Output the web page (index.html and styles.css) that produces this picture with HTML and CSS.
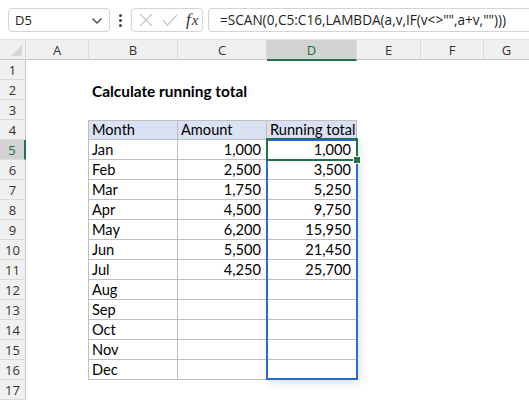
FILE: index.html
```html
<!DOCTYPE html>
<html>
<head>
<meta charset="utf-8">
<link rel="stylesheet" href="styles.css">
</head>
<body>
<div class="app">
  <div class="fbar">
    <div class="namebox"><span class="nb-text">D5</span>
      <svg class="chev" width="12" height="8" viewBox="0 0 12 8"><path d="M1.5 1.5 L6 6 L10.5 1.5" fill="none" stroke="#444" stroke-width="1.3"/></svg>
    </div>
    <div class="dots"><span></span><span></span><span></span></div>
    <div class="fxbox">
      <svg width="14" height="14" viewBox="0 0 14 14"><path d="M1 1 L13 13 M13 1 L1 13" stroke="#c8c8c8" stroke-width="1.3" fill="none"/></svg>
      <svg width="16" height="14" viewBox="0 0 16 14"><path d="M1 7.5 L5.5 12 L15 2" stroke="#c8c8c8" stroke-width="1.3" fill="none"/></svg>
      <span class="fx"><i>f</i><i class="x">x</i></span>
    </div>
    <div class="formula">=SCAN(0,C5:C16,LAMBDA(a,v,IF(v&lt;&gt;"",a+v,"")))</div>
  </div>
  <div class="sheet">
    <div class="colhdr">
      <div class="corner"><svg width="26" height="20" viewBox="0 0 26 20"><path d="M22 5 L22 16 L11 16 Z" fill="#d6d6d6"/></svg></div>
      <div class="ch a">A</div><div class="ch b">B</div><div class="ch c">C</div><div class="ch d sel">D</div><div class="ch e">E</div><div class="ch f">F</div><div class="ch g">G</div>
    </div>
    <div class="row"><div class="rh">1</div></div>
    <div class="row"><div class="rh">2</div><div class="cell a"></div><div class="cell title">Calculate running total</div></div>
    <div class="row"><div class="rh">3</div></div>
    <div class="row"><div class="rh">4</div><div class="cell a"></div><div class="cell b t th first">Month</div><div class="cell c t th">Amount</div><div class="cell d t th">Running total</div></div>
    <div class="row"><div class="rh sel">5</div><div class="cell a"></div><div class="cell b t first">Jan</div><div class="cell c t num">1,000</div><div class="cell d t num">1,000</div></div>
    <div class="row"><div class="rh">6</div><div class="cell a"></div><div class="cell b t first">Feb</div><div class="cell c t num">2,500</div><div class="cell d t num">3,500</div></div>
    <div class="row"><div class="rh">7</div><div class="cell a"></div><div class="cell b t first">Mar</div><div class="cell c t num">1,750</div><div class="cell d t num">5,250</div></div>
    <div class="row"><div class="rh">8</div><div class="cell a"></div><div class="cell b t first">Apr</div><div class="cell c t num">4,500</div><div class="cell d t num">9,750</div></div>
    <div class="row"><div class="rh">9</div><div class="cell a"></div><div class="cell b t first">May</div><div class="cell c t num">6,200</div><div class="cell d t num">15,950</div></div>
    <div class="row"><div class="rh">10</div><div class="cell a"></div><div class="cell b t first">Jun</div><div class="cell c t num">5,500</div><div class="cell d t num">21,450</div></div>
    <div class="row"><div class="rh">11</div><div class="cell a"></div><div class="cell b t first">Jul</div><div class="cell c t num">4,250</div><div class="cell d t num">25,700</div></div>
    <div class="row"><div class="rh">12</div><div class="cell a"></div><div class="cell b t first">Aug</div><div class="cell c t"></div><div class="cell d t"></div></div>
    <div class="row"><div class="rh">13</div><div class="cell a"></div><div class="cell b t first">Sep</div><div class="cell c t"></div><div class="cell d t"></div></div>
    <div class="row"><div class="rh">14</div><div class="cell a"></div><div class="cell b t first">Oct</div><div class="cell c t"></div><div class="cell d t"></div></div>
    <div class="row"><div class="rh">15</div><div class="cell a"></div><div class="cell b t first">Nov</div><div class="cell c t"></div><div class="cell d t"></div></div>
    <div class="row"><div class="rh">16</div><div class="cell a"></div><div class="cell b t first">Dec</div><div class="cell c t"></div><div class="cell d t"></div></div>
    <div class="row"><div class="rh">17</div></div>
    <div class="range"></div>
    <div class="active"><div class="handle"></div></div>
  </div>
</div>
</body>
</html>
```
FILE: styles.css
```css
* { box-sizing: border-box; }
html, body { margin: 0; padding: 0; background: #fff; }
body { width: 529px; height: 400px; overflow: hidden; font-family: "Open Sans", "Noto Sans", sans-serif; }
.app { width: 529px; height: 400px; overflow: hidden; }

.fbar { height: 39px; display: flex; align-items: flex-start; padding-top: 8px; padding-left: 8px; background: #fff; }
.namebox { width: 102px; height: 24px; border: 1px solid #d4d4d4; border-radius: 4px; display: flex; align-items: center; justify-content: space-between; padding: 0 6px 0 6px; }
.nb-text { font-family: "Open Sans", sans-serif; font-size: 13px; color: #222; }
.chev { margin-top: 1px; }
.dots { width: 21px; height: 24px; display: flex; flex-direction: column; align-items: center; justify-content: center; gap: 2px; }
.dots span { width: 3px; height: 3px; background: #444; border-radius: 50%; }
.fxbox { width: 72px; height: 24px; border: 1px solid #d4d4d4; border-radius: 4px; display: flex; align-items: center; padding-left: 7px; gap: 9px; }
.fx { font-family: "Liberation Serif", serif; font-size: 17px; color: #333; display: flex; align-items: baseline; margin-left: -1px; }
.fx i { font-style: italic; }
.fx .x { font-size: 15px; margin-left: 1px; }
.formula { flex: 1; height: 24px; margin-left: 5px; border: 1px solid #d4d4d4; border-right: none; border-radius: 4px 0 0 4px; font-family: "Open Sans", sans-serif; font-size: 13.6px; color: #222; padding-left: 11px; line-height: 22px; white-space: nowrap; }

.sheet { position: relative; }
.colhdr { display: flex; height: 21px; background: #f0f0f0; border-top: 1px solid #e4e4e4; border-bottom: 1px solid #c6c6c6; }
.corner { width: 26px; height: 20px; border-right: 1px solid #d8d8d8; }
.corner svg { display: block; }
.ch { height: 20px; display: flex; align-items: center; justify-content: center; font-family: "Open Sans", sans-serif; font-size: 13px; color: #333; border-right: 1px solid #dadada; }
.ch.sel { background: #d2d2d2; border-bottom: 2px solid #217346; height: 21px; margin-bottom: -1px; color: #1e6b3f; }
.a { width: 63px; }
.b { width: 89px; }
.c { width: 89px; }
.d { width: 90px; }
.e { width: 64px; }
.f { width: 63px; }
.g { width: 45px; border-right: none; }

.row { display: flex; height: 20px; }
.rh { width: 26px; height: 20px; background: #f0f0f0; border-right: 1px solid #c6c6c6; border-bottom: 1px solid #dadada; display: flex; align-items: center; justify-content: center; font-family: "Open Sans", sans-serif; font-size: 13px; color: #333; }
.rh.sel { background: #d2d2d2; border-right: 2px solid #217346; color: #1e6b3f; }
.cell { height: 20px; font-family: Lato, "Open Sans", sans-serif; font-size: 14.6px; color: #000; line-height: 19px; padding: 0 3px; white-space: nowrap; }
.title { font-weight: bold; font-size: 15.4px; padding-left: 3px; line-height: 23px; }
.t { border-right: 1px solid #bfbfbf; border-bottom: 1px solid #bfbfbf; }
.t.first { border-left: 1px solid #bfbfbf; }
.row:nth-child(5) .t { border-top: 1px solid #bfbfbf; }
.row:nth-child(5) .cell { line-height: 18px; }
.th { background: #d9e1f2; }
.cell.b.first { width: 90px; margin-left: -1px; }
.num { text-align: right; padding-right: 5px; }

.range { position: absolute; z-index: 2; left: 266px; top: 100px; width: 92px; height: 241px; border: 2px solid #2b6cd0; box-shadow: 2px 3px 8px rgba(0,0,0,0.12); }
.active { position: absolute; z-index: 3; left: 266px; top: 99px; width: 92px; height: 23px; border: 2px solid #217346; }
.handle { position: absolute; right: -5px; bottom: -5px; width: 6px; height: 6px; background: #217346; border: 1px solid #fff; box-sizing: content-box; }
```
